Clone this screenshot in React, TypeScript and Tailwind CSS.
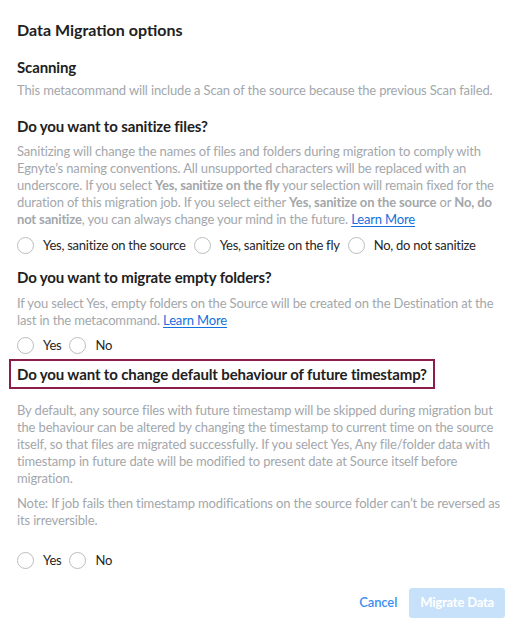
import React from 'react'

const body = 'whitespace-nowrap text-[13px] leading-[17px] tracking-[-0.15px] text-[#a3a7ab]'
const heading = 'whitespace-nowrap text-[15px] leading-[20px] tracking-[-0.13px] font-bold text-[#212121]'

const Radio = ({ label }: { label: string }) => (
  <label className="mr-[8px] flex items-center gap-[9px]">
    <span className="h-[17px] w-[17px] rounded-full border border-[#b9bcbf] bg-white" />
    <span className="whitespace-nowrap text-[13px] leading-[20px] tracking-[-0.25px] text-[#262626]">{label}</span>
  </label>
)

const LearnMore = () => (
  <a className="text-[#1470de] underline underline-offset-[2px]" href="#">
    Learn More
  </a>
)

export default function App() {
  return (
    <div
      className="min-h-[636px] w-[520px] bg-white px-[17px] pt-[19px]"
      style={{ fontFamily: 'Lato, "Noto Sans", sans-serif' }}
    >
      <h1 className="text-[16px] leading-[22px] font-bold text-[#212121]">Data Migration options</h1>

      <h2 className={`${heading} mt-[16px]`}>Scanning</h2>
      <p className={`${body} mt-[5px]`}>
        This metacommand will include a Scan of the source because the previous Scan failed.
      </p>

      <h2 className={`${heading} mt-[17px]`}>Do you want to sanitize files?</h2>
      <p className={`${body} mt-[7px]`}>
        Sanitizing will change the names of files and folders during migration to comply with
        <br />
        Egnyte&rsquo;s naming conventions. All unsupported characters will be replaced with an
        <br />
        underscore. If you select <b className="font-bold">Yes, sanitize on the fly</b> your selection will remain fixed for the
        <br />
        duration of this migration job. If you select either <b className="font-bold">Yes, sanitize on the source</b> or{' '}
        <b className="font-bold">No, do</b>
        <br />
        <b className="font-bold">not sanitize</b>, you can always change your mind in the future. <LearnMore />
      </p>
      <div className="mt-[7px] flex items-center">
        <Radio label="Yes, sanitize on the source" />
        <Radio label="Yes, sanitize on the fly" />
        <Radio label="No, do not sanitize" />
      </div>

      <h2 className={`${heading} mt-[12px]`}>Do you want to migrate empty folders?</h2>
      <p className={`${body} mt-[8px]`}>
        If you select Yes, empty folders on the Source will be created on the Destination at the
        <br />
        last in the metacommand. <LearnMore />
      </p>
      <div className="mt-[6px] flex items-center">
        <Radio label="Yes" />
        <Radio label="No" />
      </div>

      <div className="-ml-[8px] mt-[4px] inline-block border-2 border-[#8c1c4b] px-[6px] py-[2px]">
        <h2 className={`${heading} leading-[22px]`}>Do you want to change default behaviour of future timestamp?</h2>
      </div>
      <p className={`${body} mt-[13px]`}>
        By default, any source files with future timestamp will be skipped during migration but
        <br />
        the behaviour can be altered by changing the timestamp to current time on the source
        <br />
        itself, so that files are migrated successfully. If you select Yes, Any file/folder data with
        <br />
        timestamp in future date will be modified to present date at Source itself before
        <br />
        migration.
      </p>
      <p className={`${body} mt-[8px]`}>
        Note: If job fails then timestamp modifications on the source folder can&rsquo;t be reversed as
        <br />
        its irreversible.
      </p>
      <div className="mt-[21px] flex items-center">
        <Radio label="Yes" />
        <Radio label="No" />
      </div>

      <div className="-mr-[2px] mt-[18px] flex items-center justify-end gap-[12px]">
        <button className="text-[13px] font-semibold tracking-[-0.1px] text-[#3d8ff0]">Cancel</button>
        <button className="h-[30px] rounded-[3px] bg-[#c8e1fb] px-[11px] text-[13px] font-bold tracking-[-0.2px] text-white">
          Migrate Data
        </button>
      </div>
    </div>
  )
}
